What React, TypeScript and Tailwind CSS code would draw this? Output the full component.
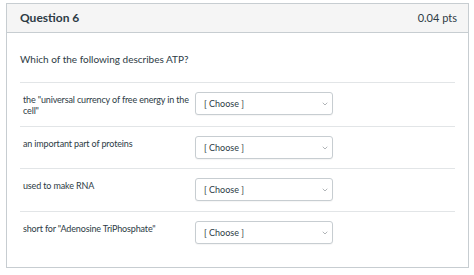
import { ChevronDown } from "lucide-react";

const rows = [
  'the "universal currency of free energy in the cell"',
  "an important part of proteins",
  "used to make RNA",
  'short for "Adenosine TriPhosphate"',
];

function ChooseSelect() {
  return (
    <div className="shrink-0 w-[138px] h-[23px] flex items-center justify-between pl-[8px] pr-[3px] border border-[#c7cdd1] rounded-[3px] bg-white shadow-[0_1px_1px_rgba(0,0,0,0.04)] text-[9px] text-[#2d3b45]">
      <span>[ Choose ]</span>
      <ChevronDown className="w-[8px] h-[8px] text-[#8a8f94]" strokeWidth={2} />
    </div>
  );
}

export default function App() {
  return (
    <div className="w-[474px] h-[275px] bg-white pt-[3px] pl-[6px] font-['Lato','Liberation_Sans',sans-serif] text-[#2d3b45]">
      <div className="w-[463px] h-[265px] border border-[#c7cdd1]">
        <div className="h-[29px] bg-[#f5f5f5] border-b border-[#c7cdd1] flex items-center justify-between pl-[13px] pr-[11px]">
          <span className="text-[12px] font-bold">Question 6</span>
          <span className="text-[11px]">0.04 pts</span>
        </div>
        <div className="px-[13px]">
          <p className="text-[10px] pt-[20px] pb-[17px] leading-[12px]">Which of the following describes ATP?</p>
          {rows.map((r, i) => (
            <div
              key={i}
              className={`flex items-start pl-[3px] pt-[9px] border-t border-[#e2e5e7] ${i === 1 ? "h-[42px]" : i === 0 ? "h-[44px]" : "h-[43px]"}`}
            >
              <div className="w-[172px] shrink-0 text-[9px] leading-[11px] pt-[2px] tracking-[-0.15px]">{r}</div>
              <ChooseSelect />
            </div>
          ))}
        </div>
      </div>
    </div>
  );
}
